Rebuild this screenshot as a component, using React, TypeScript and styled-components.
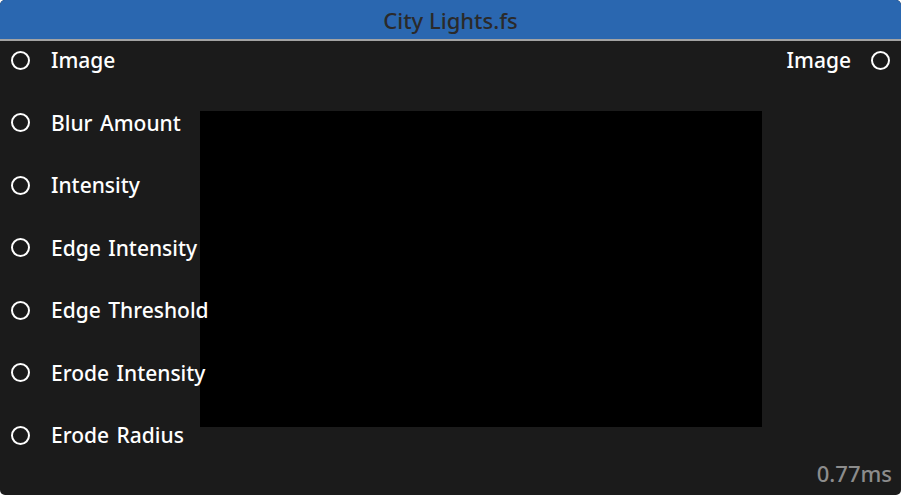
import React from "react";
import styled, { createGlobalStyle } from "styled-components";

const Global = createGlobalStyle`
  html, body { margin: 0; padding: 0; background: #ffffff; }
  body { font-family: "Noto Sans", "Open Sans", sans-serif; }
`;

const Node = styled.div`
  width: 901px;
  height: 495px;
  border-radius: 5px;
  overflow: hidden;
  background: #1b1b1b;
  display: flex;
  flex-direction: column;
`;

const Header = styled.div`
  height: 39px;
  flex: none;
  background: #2a67b0;
  border-bottom: 2px solid #a3a3a3;
  display: flex;
  align-items: center;
  justify-content: center;
  color: #2a2a2a;
  font-size: 22px;
  font-weight: 500;
`;

const Body = styled.div`
  flex: 1;
  display: grid;
  grid-template-columns: 200px 562px 1fr;
  grid-template-rows: 1fr auto;
`;

const Inputs = styled.div`
  grid-column: 1;
  grid-row: 1 / 3;
  position: relative;
  z-index: 1;
  display: flex;
  flex-direction: column;
  gap: 38.5px;
  padding-top: 7px;
`;

const Port = styled.div<{ $side: "in" | "out" }>`
  height: 24px;
  display: flex;
  align-items: center;
  flex-direction: ${(p) => (p.$side === "in" ? "row" : "row-reverse")};
  gap: ${(p) => (p.$side === "in" ? "21px" : "20px")};
  padding: ${(p) => (p.$side === "in" ? "0 0 0 11px" : "0 11px 0 0")};
  color: #ffffff;
  font-size: 21px;
  font-weight: 500;
  word-spacing: 2px;
  white-space: nowrap;
`;

const Dot = styled.span`
  width: 15px;
  height: 15px;
  border: 2px solid #ffffff;
  border-radius: 50%;
  flex: none;
`;

const Preview = styled.div`
  grid-column: 2;
  grid-row: 1;
  margin-top: 70px;
  height: 316px;
  background: #000000;
`;

const Outputs = styled.div`
  grid-column: 3;
  grid-row: 1;
  padding-top: 7px;
  display: flex;
  flex-direction: column;
  align-items: flex-end;
`;

const Timing = styled.div`
  grid-column: 2 / 4;
  grid-row: 2;
  justify-self: end;
  padding: 0 9px 7px 0;
  color: #8c8c8c;
  font-size: 22px;
  font-weight: 500;
`;

const inputs = [
  "Image",
  "Blur Amount",
  "Intensity",
  "Edge Intensity",
  "Edge Threshold",
  "Erode Intensity",
  "Erode Radius",
];

export default function App() {
  return (
    <>
      <Global />
      <Node>
        <Header>City Lights.fs</Header>
        <Body>
          <Inputs>
            {inputs.map((name) => (
              <Port key={name} $side="in">
                <Dot />
                {name}
              </Port>
            ))}
          </Inputs>
          <Preview />
          <Outputs>
            <Port $side="out">
              <Dot />
              Image
            </Port>
          </Outputs>
          <Timing>0.77ms</Timing>
        </Body>
      </Node>
    </>
  );
}
